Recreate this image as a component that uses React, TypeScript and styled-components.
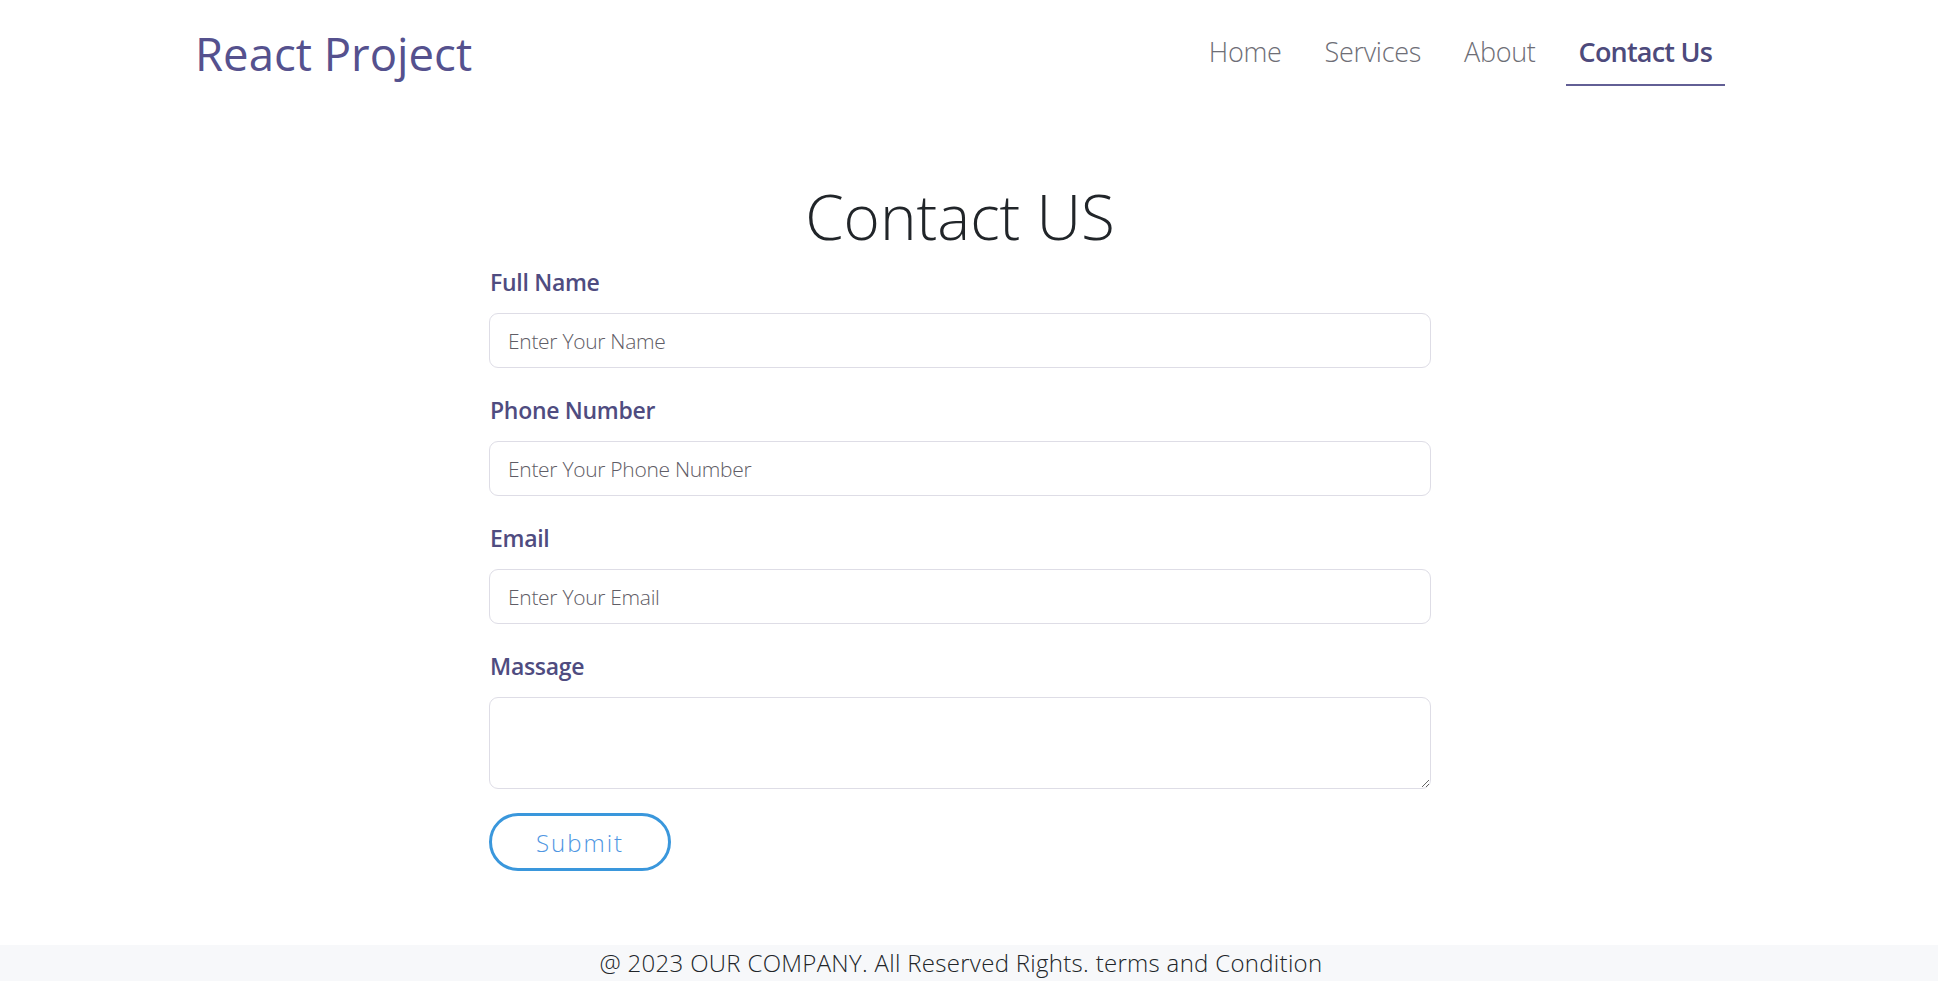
import React from "react";
import styled, { createGlobalStyle } from "styled-components";

const GlobalStyle = createGlobalStyle`
  html, body { margin: 0; padding: 0; background: #ffffff; }
  body {
    font-family: "Open Sans", "Noto Sans", Arial, sans-serif;
    color: #212529;
  }
  * { box-sizing: border-box; }
`;

const Page = styled.div`
  min-height: 1003px;
  display: flex;
  flex-direction: column;
`;

const Header = styled.header`
  display: flex;
  justify-content: space-between;
  align-items: flex-start;
  padding: 21px 213px 0 195px;
`;

const Logo = styled.a`
  font-size: 45.5px;
  line-height: 64px;
  font-weight: 400;
  color: #55518e;
  text-decoration: none;
`;

const Nav = styled.nav`
  display: flex;
  gap: 17px;
  margin-top: 11px;
`;

const NavLink = styled.a<{ $active?: boolean }>`
  display: block;
  padding: 0 13px 12px;
  font-size: 27px;
  line-height: 40px;
  font-weight: ${(p) => (p.$active ? 600 : 300)};
  color: ${(p) => (p.$active ? "#4d4a7c" : "#6e6e76")};
  text-decoration: none;
  border-bottom: 2px solid ${(p) => (p.$active ? "#625f95" : "transparent")};
  letter-spacing: ${(p) => (p.$active ? "-0.8px" : "-0.3px")};
`;

const Main = styled.main`
  padding: 92px 18px 0 0;
`;

const Form = styled.form`
  width: 942px;
  margin: 0 auto;
  display: flex;
  flex-direction: column;
`;

const Title = styled.h1`
  margin: 0 0 12px;
  text-align: center;
  font-size: 62px;
  line-height: 76px;
  font-weight: 300;
  color: #212529;
`;

const Field = styled.div`
  display: flex;
  flex-direction: column;
  margin-bottom: 26px;
`;

const Label = styled.label`
  font-size: 23px;
  line-height: 32px;
  font-weight: 600;
  color: #4f4c80;
  margin: 0 0 15px 1px;
  letter-spacing: -0.3px;
`;

const Input = styled.input`
  height: 55px;
  width: 100%;
  padding: 0 18px;
  border: 1px solid #dedde6;
  border-radius: 9px;
  font-family: inherit;
  font-size: 21px;
  font-weight: 300;
  letter-spacing: -0.3px;
  color: #212529;
  outline: none;
  &::placeholder { color: #5f5d66; }
`;

const TextArea = styled.textarea`
  height: 92px;
  width: 100%;
  padding: 10px 18px;
  border: 1px solid #dedde6;
  border-radius: 9px;
  font-family: inherit;
  font-size: 21px;
  outline: none;
  resize: vertical;
  display: block;
`;

const MessageField = styled(Field)`
  margin-bottom: 24px;
`;

const SubmitButton = styled.button`
  align-self: flex-start;
  width: 182px;
  height: 58px;
  border: 3px solid #3a97dc;
  border-radius: 29px;
  background: #ffffff;
  color: #4f96e2;
  font-family: inherit;
  font-size: 24px;
  font-weight: 300;
  letter-spacing: 2px;
  padding: 0;
  cursor: pointer;
`;

const Footer = styled.footer`
  margin-top: 74px;
  height: 36px;
  background: #f7f8fa;
  text-align: center;
  font-size: 24px;
  line-height: 36px;
  font-weight: 300;
  color: #212529;
  padding-right: 16px;
  letter-spacing: 0.3px;
`;

export default function App() {
  return (
    <Page>
      <GlobalStyle />
      <Header>
        <Logo href="#">React Project</Logo>
        <Nav>
          <NavLink href="#">Home</NavLink>
          <NavLink href="#">Services</NavLink>
          <NavLink href="#">About</NavLink>
          <NavLink href="#" $active>
            Contact Us
          </NavLink>
        </Nav>
      </Header>
      <Main>
        <Form onSubmit={(e) => e.preventDefault()}>
          <Title>Contact US</Title>
          <Field>
            <Label htmlFor="name">Full Name</Label>
            <Input id="name" placeholder="Enter Your Name" />
          </Field>
          <Field>
            <Label htmlFor="phone">Phone Number</Label>
            <Input id="phone" placeholder="Enter Your Phone Number" />
          </Field>
          <Field>
            <Label htmlFor="email">Email</Label>
            <Input id="email" placeholder="Enter Your Email" />
          </Field>
          <MessageField>
            <Label htmlFor="msg">Massage</Label>
            <TextArea id="msg" />
          </MessageField>
          <SubmitButton type="submit">Submit</SubmitButton>
        </Form>
      </Main>
      <Footer>@ 2023 OUR COMPANY. All Reserved Rights. terms and Condition</Footer>
    </Page>
  );
}
